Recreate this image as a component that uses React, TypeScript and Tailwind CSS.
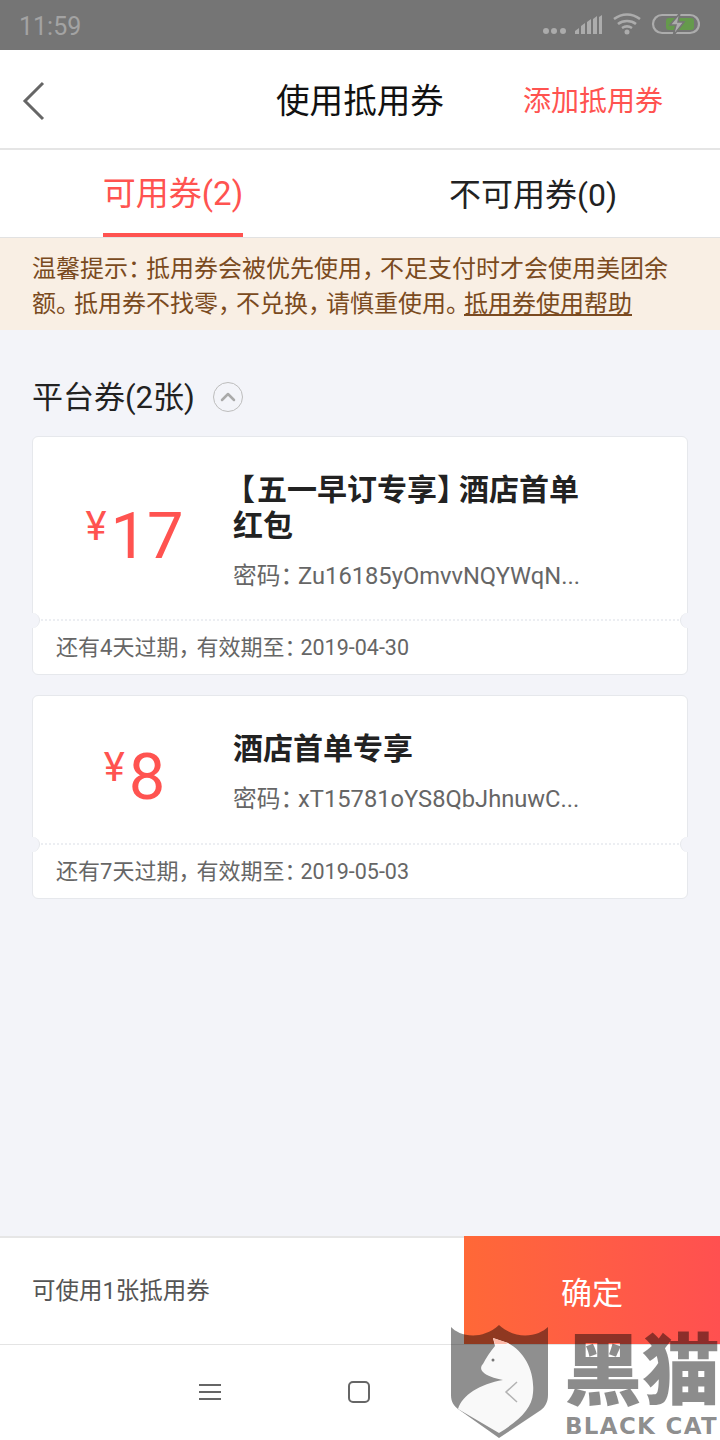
import { ChevronUp } from "lucide-react";

const font = "font-['Roboto','Noto_Sans_CJK_SC',sans-serif]";

// narrow punctuation, the phone's font sets these tighter than full width
function P({ c }: { c: string }) {
  return <span className="tracking-[-6px]">{c}</span>;
}

type Coupon = {
  amount: string;
  title: React.ReactNode[];
  code: string;
  days: number;
  date: string;
  topCls: string;
};

const coupons: Coupon[] = [
  {
    amount: "17",
    title: [
      <>
        <span className="ml-[-8px] tracking-[2px]">【</span>五一早订专享<span className="tracking-[-8px]">】</span>酒店首单
      </>,
      "红包",
    ],
    code: "Zu16185yOmvvNQYWqN...",
    days: 4,
    date: "2019-04-30",
    topCls: "h-[184px]",
  },
  {
    amount: "8",
    title: ["酒店首单专享"],
    code: "xT15781oYS8QbJhnuwC...",
    days: 7,
    date: "2019-05-03",
    topCls: "h-[149px]",
  },
];

function StatusBar() {
  return (
    <div className="h-[50px] shrink-0 bg-[#757575] flex items-center justify-between pl-[19px] pr-[20px]">
      <span className="mt-[3px] text-[25px] text-[#a3a3a3] leading-none">11:59</span>
      <svg width="160" height="34" viewBox="0 0 160 34">
        <g fill="#acacac">
          <circle cx="6" cy="23" r="3" />
          <circle cx="14" cy="23" r="3" />
          <circle cx="23" cy="23" r="3" />
          <path d="M35 23l4-3v6h-4zM41 18l4-3v11h-4zM47 14l4-3v15h-4zM53 11l4-3v18h-4zM59 9l3-2v19h-3z" />
          <circle cx="87" cy="24" r="2.500" />
        </g>
        <g fill="none" stroke="#acacac" strokeWidth="2.600">
          <path d="M74 11c8-6 18-6 26 0" />
          <path d="M78 16c5-4 13-4 18 0" />
          <path d="M82 20c3-2 7-2 10 0" />
        </g>
        <rect x="113" y="7" width="46" height="18" rx="9" fill="none" stroke="#acacac" strokeWidth="2.200" />
        <rect x="126" y="10" width="28" height="12" rx="3" fill="#659a4c" />
        <path d="M140 5l-10 12h6l-3 11 11-14h-6z" fill="#acacac" stroke="#757575" strokeWidth="1.500" />
      </svg>
    </div>
  );
}

function Header() {
  return (
    <div className="h-[100px] shrink-0 bg-white border-b-2 border-[#e5e5e5] flex items-center justify-between pl-[22px] pr-[57px] relative">
      <svg width="24" height="40" viewBox="0 0 24 40" className="mt-[3px]">
        <path d="M21 2L3 20l18 18" fill="none" stroke="#666" strokeWidth="3" />
      </svg>
      <span className="absolute left-[276px] top-[30px] text-[33.600px] leading-[44px] text-[#111]">使用抵用券</span>
      <span className="mt-[6px] text-[28px] text-[#ff5350]">添加抵用券</span>
    </div>
  );
}

function Tabs() {
  return (
    <div className="h-[88px] shrink-0 bg-white border-b border-[#e2e2e2] flex">
      <div className="w-[346px] flex justify-center">
        <div className="h-[87px] w-[140px] border-b-4 border-[#ff5350] flex items-center justify-center pt-[4px] text-[33px] text-[#ff5350] whitespace-nowrap">
          可用券(2)
        </div>
      </div>
      <div className="flex-1 flex items-center justify-center pt-[3px] text-[32px] text-[#222] whitespace-nowrap">
        不可用券(0)
      </div>
    </div>
  );
}

function Notice() {
  return (
    <div className="h-[92px] shrink-0 bg-[#f9efe4] px-[32px] pt-[14px] text-[24px] leading-[35px] text-[#7a4a20] whitespace-nowrap">
      <div>
        温馨提示<P c="：" />抵用券会被优先使用<P c="，" />不足支付时才会使用美团余
      </div>
      <div>
        额<P c="。" />抵用券不找零<P c="，" />不兑换<P c="，" />请慎重使用<P c="。" />
        <span className="underline">抵用券使用帮助</span>
      </div>
    </div>
  );
}

function CouponCard({ c }: { c: Coupon }) {
  return (
    <div className="relative rounded-[6px] border border-[#e6e8ec] bg-white">
      <div className={`${c.topCls} flex items-center border-b-2 border-dotted border-[#eceef2]`}>
        <div className="w-[200px] pl-[3px] flex items-baseline justify-center text-[#ff5350] mt-[16px]">
          <span className="text-[40px] leading-none mr-[4px] relative top-[-18px]">¥</span>
          <span className="text-[65px] leading-none">{c.amount}</span>
        </div>
        <div className="flex-1 min-w-0 pt-[8px]">
          {c.title.map((t, i) => (
            <div key={i} className="text-[30px] leading-[36px] font-bold text-[#222] whitespace-nowrap">
              {t}
            </div>
          ))}
          <div className="mt-[15px] text-[23.700px] leading-[34px] text-[#666] whitespace-nowrap">
            密码<P c="：" />{c.code}
          </div>
        </div>
      </div>
      <div className="h-[53px] pl-[23px] flex items-center text-[22px] text-[#666] whitespace-nowrap">
        <span>
          还有{c.days}天过期<span className="tracking-[-4px]">，</span>有效期至<P c="：" />
          <span className="text-[21.500px]">{c.date}</span>
        </span>
      </div>
      {/* ticket notches */}
      <span className="absolute left-[-8px] bottom-[46px] w-[15px] h-[15px] rounded-full bg-[#f3f4f9] border-r border-[#e6e8ec]" />
      <span className="absolute right-[-8px] bottom-[46px] w-[15px] h-[15px] rounded-full bg-[#f3f4f9] border-l border-[#e6e8ec]" />
    </div>
  );
}

function BottomBar() {
  return (
    <div className="h-[108px] shrink-0 bg-white border-t-2 border-[#e6e6e6] flex">
      <div className="flex-1 pl-[32px] pt-[2px] flex items-center text-[23.500px] text-[#555]">可使用1张抵用券</div>
      <div className="w-[256px] mt-[-2px] pt-[8px] bg-gradient-to-r from-[#ff6837] to-[#ff5050] flex items-center justify-center text-[31px] text-white">
        确定
      </div>
    </div>
  );
}

function NavBar() {
  return (
    <div className="h-[96px] shrink-0 bg-white border-t border-[#e4e4e4] flex items-center pb-[1px]">
      <svg width="22" height="18" viewBox="0 0 22 18" className="ml-[199px]">
        <path d="M0 2h22M0 9h22M0 16h22" stroke="#666" strokeWidth="2" />
      </svg>
      <span className="ml-[127px] w-[22px] h-[22px] rounded-[5px] border-2 border-[#666]" />
    </div>
  );
}

// translucent watermark stamped over the bottom right corner
function Watermark() {
  return (
    <div className="absolute left-[451px] top-[1325px] w-[269px] h-[115px]">
      <svg width="100" height="115" viewBox="451 1325 100 115" className="absolute left-0 top-0">
        <path
          d="M451 1327C458 1335 480 1342 499 1325C518 1342 540 1335 548 1327V1395C548 1402 545 1407 541 1410L499 1438L458 1409C454 1406 451 1402 451 1395Z"
          fill="#000"
          fillOpacity="0.44"
        />
        <path
          d="M493 1338L508 1343C525 1352 535 1372 533 1393C532 1408 520 1420 499 1433L458 1409C462 1395 480 1384 503 1380C494 1378 487 1376 483 1372C480 1369 481 1366 483 1364C486 1358 490 1352 495 1346Z"
          fill="#fff"
          fillOpacity="0.95"
        />
        <path d="M493 1338L508 1343L506 1344H495Z" fill="#ffb9a8" />
        <circle cx="493" cy="1360" r="1.500" fill="#777" />
        <path d="M517 1382l-11 10l11 10" fill="none" stroke="#b3b3b3" strokeWidth="1.500" />
      </svg>
      <span className="absolute left-[113px] top-[10px] text-[78px] leading-[76px] font-black text-black/45 whitespace-nowrap">
        黑猫
      </span>
      <span className="absolute left-[114px] top-[88px] text-[23px] leading-[26px] font-bold tracking-[1.300px] text-black/45 whitespace-nowrap font-['DejaVu_Sans',sans-serif]">
        BLACK CAT
      </span>
    </div>
  );
}

export default function App() {
  return (
    <div className={`${font} relative w-[720px] h-[1440px] overflow-hidden flex flex-col bg-[#f3f4f9]`}>
      <StatusBar />
      <Header />
      <Tabs />
      <Notice />
      <div className="flex-1 px-[32px]">
        <div className="mt-[47px] h-[40px] flex items-center gap-[18px]">
          <span className="relative top-[1px] text-[31px] leading-[40px] text-[#222]">平台券(2张)</span>
          <span className="w-[30px] h-[30px] rounded-full border border-[#bdbdbd] flex items-center justify-center">
            <ChevronUp size={24} strokeWidth={2.500} className="text-[#aaa]" />
          </span>
        </div>
        <div className="mt-[19px] flex flex-col gap-[20px]">
          {coupons.map((c) => (
            <CouponCard key={c.amount} c={c} />
          ))}
        </div>
      </div>
      <BottomBar />
      <NavBar />
      <Watermark />
    </div>
  );
}
